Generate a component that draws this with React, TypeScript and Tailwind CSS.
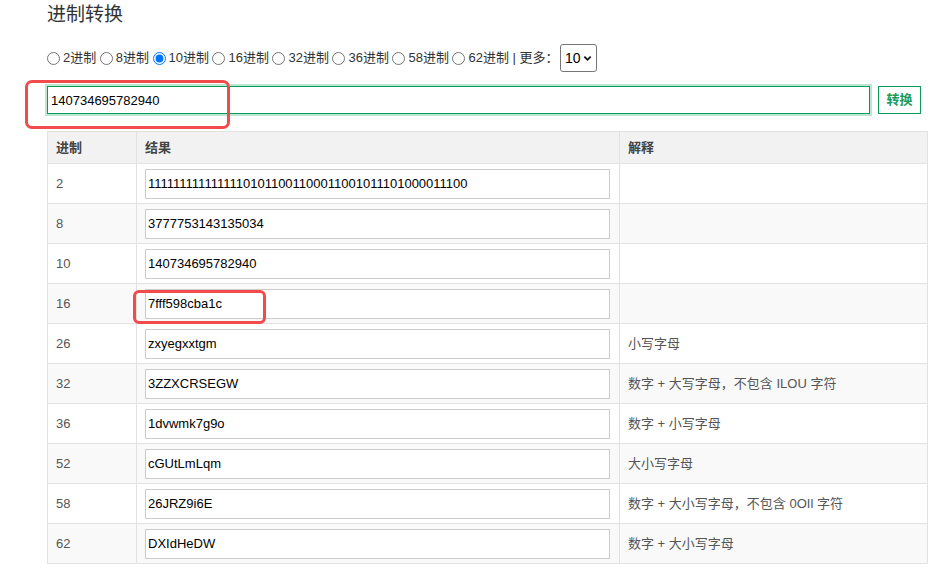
import { useState } from 'react';

const bases = [2, 8, 10, 16, 32, 36, 58, 62];

const rows: { base: number; value: string; note: string }[] = [
  { base: 2, value: '11111111111111101011001100011001011101000011100', note: '' },
  { base: 8, value: '3777753143135034', note: '' },
  { base: 10, value: '140734695782940', note: '' },
  { base: 16, value: '7fff598cba1c', note: '' },
  { base: 26, value: 'zxyegxxtgm', note: '小写字母' },
  { base: 32, value: '3ZZXCRSEGW', note: '数字 + 大写字母，不包含 ILOU 字符' },
  { base: 36, value: '1dvwmk7g9o', note: '数字 + 小写字母' },
  { base: 52, value: 'cGUtLmLqm', note: '大小写字母' },
  { base: 58, value: '26JRZ9i6E', note: '数字 + 大小写字母，不包含 0OIl 字符' },
  { base: 62, value: 'DXIdHeDW', note: '数字 + 大小写字母' },
];

export default function App() {
  const [base, setBase] = useState(10);
  const [input, setInput] = useState('140734695782940');

  return (
    <div
      className="relative w-[931px] h-[582px] overflow-hidden bg-white pl-[47px] text-[13px] text-[#333]"
      style={{ fontFamily: '"Liberation Sans", "Noto Sans CJK SC", sans-serif' }}
    >
      <h1 className="h-[30px] leading-[30px] text-[19px] font-normal text-[#333]">进制转换</h1>

      <div className="mt-[14px] flex items-center h-[28px] gap-[3.5px] text-[#333]">
        {bases.map((b) => (
          <label key={b} className="flex items-center cursor-pointer">
            <input
              type="radio"
              name="base"
              checked={base === b}
              onChange={() => setBase(b)}
              className="m-0 mr-[3px] w-[13px] h-[13px] accent-[#0075ff]"
            />
            <span>{b}进制</span>
          </label>
        ))}
        <span>| 更多：</span>
        <div className="relative ml-[-2px]">
          <select
            defaultValue="10"
            className="appearance-none h-[28px] w-[37px] border border-[#767676] rounded-[3px] pl-[4px] text-[14px] text-black bg-white"
          >
            {[2, 8, 10, 16, 26, 32, 36, 52, 58, 62].map((b) => (
              <option key={b} value={b}>
                {b}
              </option>
            ))}
          </select>
          <svg
            viewBox="0 0 10 10"
            className="pointer-events-none absolute right-[5px] top-[10px] w-[9px] h-[9px]"
          >
            <path d="M1.5 3 L5 6.5 L8.5 3" fill="none" stroke="#111" strokeWidth="2" />
          </svg>
        </div>
      </div>

      <div className="mt-[14px] flex items-center gap-[8px] pr-[10px]">
        <input
          value={input}
          onChange={(e) => setInput(e.target.value)}
          className="w-[823px] h-[28px] border border-[#0a9a5a] shadow-[0_0_0_2px_#bde6d3] pl-[3px] text-[13px] text-black outline-none"
        />
        <button className="w-[43px] h-[28px] border border-[#0a9a5a] bg-white text-[13px] font-bold text-[#1a9a5c]">
          转换
        </button>
      </div>

      <table className="mt-[17px] w-[880px] table-fixed border-collapse text-[13px]">
        <colgroup>
          <col className="w-[89px]" />
          <col className="w-[483px]" />
          <col className="w-[308px]" />
        </colgroup>
        <thead>
          <tr className="bg-[#f2f2f2] h-[32px]">
            <th className="border border-[#e2e2e2] px-[8px] text-left font-bold text-[#444]">进制</th>
            <th className="border border-[#e2e2e2] px-[8px] text-left font-bold text-[#444]">结果</th>
            <th className="border border-[#e2e2e2] px-[8px] text-left font-bold text-[#444]">解释</th>
          </tr>
        </thead>
        <tbody>
          {rows.map((r, i) => (
            <tr key={r.base} className={i % 2 === 1 ? 'bg-[#f9f9f9] h-[40px]' : 'bg-white h-[40px]'}>
              <td className="border border-[#e2e2e2] px-[8px] text-[#555]">{r.base}</td>
              <td className="border border-[#e2e2e2] pl-[8px] pr-[9px]">
                <input
                  readOnly
                  value={r.value}
                  className="w-full h-[30px] border border-[#cccccc] bg-white pl-[2px] text-[13px] text-black outline-none"
                />
              </td>
              <td className="border border-[#e2e2e2] px-[8px] text-[#555]">{r.note}</td>
            </tr>
          ))}
        </tbody>
      </table>

      <div className="pointer-events-none absolute left-[25px] top-[80px] w-[205px] h-[49px] border-[3px] border-[#f24b4b] rounded-[7px]" />
      <div className="pointer-events-none absolute left-[133px] top-[290px] w-[133px] h-[34px] border-[3px] border-[#f24b4b] rounded-[6px]" />
    </div>
  );
}
